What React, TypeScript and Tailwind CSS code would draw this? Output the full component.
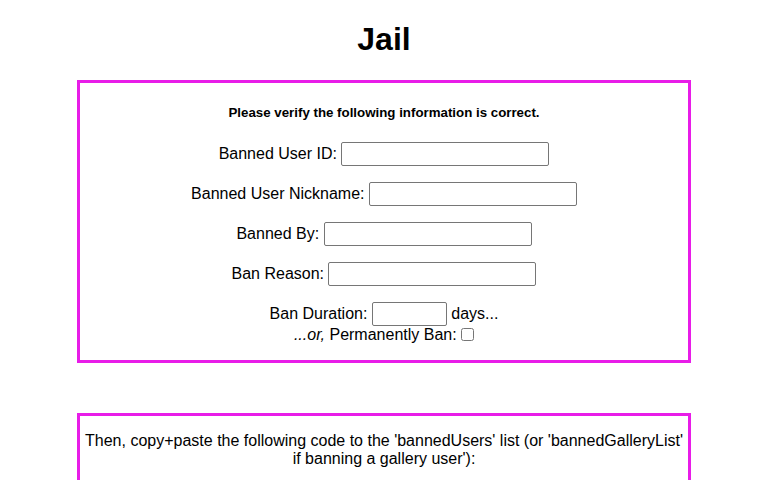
import React from 'react'

const font = { fontFamily: '"Liberation Sans", Arial, sans-serif' }

function Field({ label, width = 'w-[208px]' }: { label: string; width?: string }) {
  return (
    <div className="flex items-center justify-center h-[24px] mb-[16px] text-[16px] text-black">
      <span>{label}:&nbsp;</span>
      <input type="text" className={`${width} h-[24px] border border-[#767676] rounded-[2px] bg-white`} />
    </div>
  )
}

export default function App() {
  return (
    <div className="bg-white min-h-[480px] text-black overflow-hidden" style={font}>
      <h1 className="text-[32px] leading-[37px] font-bold text-center pt-[21px] mb-[22px]">Jail</h1>

      <div className="w-[614px] mx-auto border-[3px] border-[#e81ce8]">
        <h5 className="text-[13.3px] leading-[15px] font-bold text-center mt-[22px] mb-[22px]">
          Please verify the following information is correct.
        </h5>
        <Field label="Banned User ID" />
        <Field label="Banned User Nickname" />
        <Field label="Banned By" />
        <Field label="Ban Reason" />
        <div className="mb-[16px] text-[16px] text-center">
          <div className="flex items-center justify-center h-[24px]">
            <span>Ban Duration:&nbsp;</span>
            <input type="text" className="w-[75px] h-[24px] border border-[#767676] rounded-[2px] bg-white" />
            <span>&nbsp;days...</span>
          </div>
          <div className="flex items-center justify-center h-[18px] leading-[18px]">
            <span>
              <i>...or,</i> Permanently Ban:&nbsp;
            </span>
            <input type="checkbox" className="w-[13px] h-[13px] mt-[-1px]" />
          </div>
        </div>
      </div>

      <div className="w-[614px] mx-auto mt-[50px] border-[3px] border-[#e81ce8] px-[4px]">
        <p className="text-[16px] leading-[18px] text-center mt-[16px] mb-[16px]">
          Then, copy+paste the following code to the 'bannedUsers' list (or 'bannedGalleryList' if banning a gallery user'):
        </p>
      </div>
    </div>
  )
}
